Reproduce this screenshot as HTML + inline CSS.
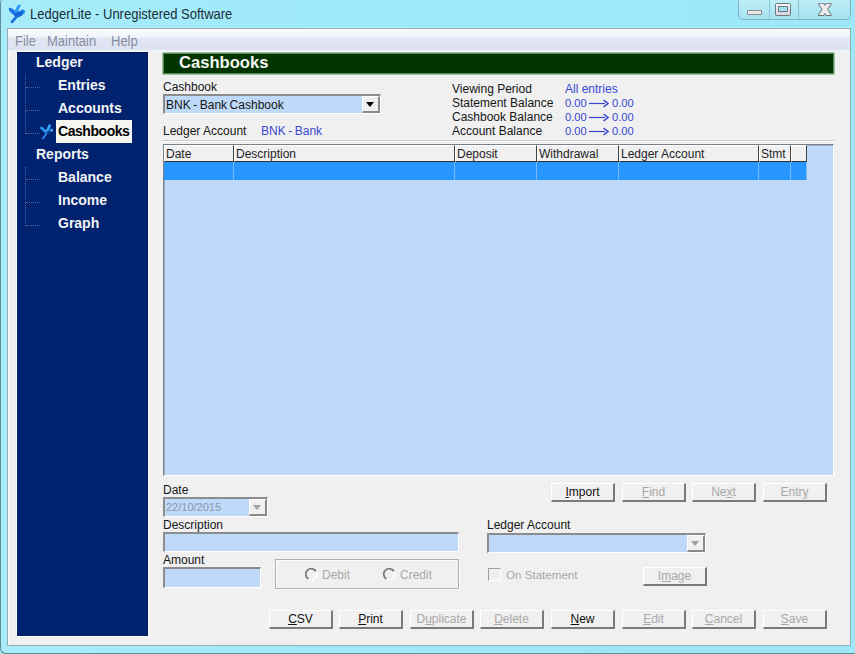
<!DOCTYPE html>
<html><head><meta charset="utf-8">
<style>
*{margin:0;padding:0;box-sizing:border-box}
html,body{width:855px;height:654px;overflow:hidden;background:#a6e4f4}
body{position:relative;font-family:"Liberation Sans",sans-serif;font-size:12px;color:#111}
.a{position:absolute}
#frame{left:0;top:0;width:855px;height:654px;border-left:1px solid #5f8e98;border-bottom:1px solid #5f8e98;border-radius:3px 0 0 6px;
 background:linear-gradient(90deg,#a8ecfa 0%,#9ee9fa 40%,#9ce8f9 100%)}
#title{left:30px;top:6px;font-size:13px;color:#1a2e38;white-space:nowrap;transform-origin:0 3.25px;transform:scaleY(1.13)}
#ctl{left:738px;top:0;width:113px;height:20px;border:1px solid #7fb4c2;border-top:none;border-radius:0 0 5px 5px;background:linear-gradient(#bdeef8,#a7e3f1)}
#client{left:7px;top:28px;width:844px;height:618px;background:#f0f0f0;border:1px solid #96aab0;box-shadow:inset 1px 0 0 #fcfcfc}
#menu{left:8px;top:29px;width:842px;height:23px;background:linear-gradient(#fafbfd 0%,#f3f5fb 32%,#e2e6f4 42%,#dde2f3 90%,#eef0f8 91%,#f4f6fb 100%)}
.mi{top:33px;font-size:13px;color:#868e9c;transform-origin:0 3px;transform:scaleY(1.1)}
#nav{left:17px;top:52px;width:132px;height:585px;background:#00226f;border-right:1px solid #fafcff;border-bottom:1px solid #fafcff;box-shadow:-1px 0 0 #fafcff, inset -1px 0 0 #001a55, inset 0 1px 0 #001456}
.nv{font-size:14px;font-weight:bold;color:#f4f4f4;white-space:nowrap}
#hdr{left:162px;top:52px;width:673px;height:23px;background:#003500;border:1px solid #9cc49c;box-shadow:inset 0 0 0 1px #5a8c5a;border-radius:2px}
#hdrt{left:179px;top:53.3px;font-size:16.6px;font-weight:bold;color:#f4f4f4}
.lb{font-size:12px;color:#161616;white-space:nowrap}
.bl{font-size:12px;color:#3848d0;white-space:nowrap}
.vl{font-size:11.2px;top:0}
.tb{background:#bfd9f9;border-top:2px solid #8c8c8c;border-left:2px solid #8c8c8c;border-bottom:1px solid #fff;border-right:1px solid #fff}
.dd{background:#f0f0f0;border-top:1px solid #fff;border-left:1px solid #fff;border-right:2px solid #8a8a8a;border-bottom:2px solid #8a8a8a}
.btn{height:19px;width:64px;background:#f0f0f0;border-top:1px solid #fff;border-left:1px solid #fff;border-right:2px solid #7a7a7a;border-bottom:2px solid #7a7a7a;text-align:center;font-size:12px;line-height:16px;color:#111}
.dis{color:#a8a8a8}
u{text-decoration:underline}
#grid{left:163px;top:144px;width:671px;height:332px;background:#bfdaf8;border-top:1px solid #7a8086;border-left:1px solid #7a8086;border-bottom:1px solid #fff;border-right:1px solid #fff;box-shadow:inset 1px 1px 0 #9aacc0}
.hc{top:145px;height:17px;background:#f0f0f0;border-top:1px solid #fff;border-left:1px solid #fff;border-right:1px solid #404040;border-bottom:1px solid #303030;font-size:12px;line-height:15px;padding-left:1px;padding-top:1.3px;color:#1e1e1e;white-space:nowrap}
.sc{top:162px;height:18px;background:#2896ff;border-right:1px solid #7ab8f8}
</style></head><body>
<div id="frame" class="a"></div>
<svg class="a" style="left:4px;top:2px" width="24" height="24" viewBox="0 0 24 24">
 <path d="M4.8 5.6 Q8.5 6.2 12 9.4 L11 14 Q7 11.5 5 8.6 Z" fill="#1a74e6"/>
 <path d="M17 2.6 L13.6 11 L10.2 10.4 L13.4 3.4 Q15 2.4 17 2.6 Z" fill="#2c9af4"/>
 <circle cx="18.7" cy="9.8" r="2.3" fill="#2080ea"/>
 <ellipse cx="14.8" cy="12.2" rx="4.6" ry="2.7" fill="#1562d6" transform="rotate(-22 14.8 12.2)"/>
 <path d="M13 14.2 L8 19.8" stroke="#1a6ee0" stroke-width="2.7" stroke-linecap="round"/>
</svg>
<div id="title" class="a">LedgerLite - Unregistered Software</div>
<div id="ctl" class="a"></div>
<div class="a" style="left:769px;top:0;width:1px;height:19px;background:#8cc2cf"></div>
<div class="a" style="left:798px;top:0;width:1px;height:19px;background:#8cc2cf"></div>
<div class="a" style="left:747px;top:10px;width:15px;height:5px;background:#e8e8ea;border:1px solid #8a8a8a;border-radius:1px"></div>
<div class="a" style="left:775px;top:3px;width:16px;height:13px;background:linear-gradient(#f4f4f6,#d8d4dc);border:1px solid #6d787e;border-radius:1.5px"></div>
<div class="a" style="left:778px;top:6px;width:10px;height:6px;background:#a4e2f0;border:1px solid #6d787e"></div>
<svg class="a" style="left:815px;top:0px" width="20" height="20" viewBox="0 0 20 20">
 <path d="M3.8 3.8H8.4L15.9 15.1H11.3Z M11.3 3.8H15.9L8.4 15.1H3.8Z" fill="#6a757a" stroke="#6a757a" stroke-width="1.8" stroke-linejoin="round"/>
 <path d="M3.8 3.8H8.4L15.9 15.1H11.3Z M11.3 3.8H15.9L8.4 15.1H3.8Z" fill="#ecebef"/>
</svg>
<div class="a" style="left:8px;top:27px;width:843px;height:1px;background:#b2eef9"></div>
<div id="client" class="a"></div>
<div id="menu" class="a"></div>
<div class="a mi" style="left:15px">File</div>
<div class="a mi" style="left:47px">Maintain</div>
<div class="a mi" style="left:111px">Help</div>

<div id="nav" class="a"></div>
<div class="a nv" style="left:36px;top:54px">Ledger</div>
<div class="a nv" style="left:58px;top:77px">Entries</div>
<div class="a nv" style="left:58px;top:100px">Accounts</div>
<div class="a" style="left:56px;top:120px;width:76px;height:23px;background:#f6f6f0"></div>
<div class="a nv" style="left:58px;top:123px;color:#000;letter-spacing:-0.45px">Cashbooks</div>
<div class="a nv" style="left:36px;top:146px">Reports</div>
<div class="a nv" style="left:58px;top:169px">Balance</div>
<div class="a nv" style="left:58px;top:192px">Income</div>
<div class="a nv" style="left:58px;top:215px">Graph</div>
<div class="a" style="left:25px;top:75px;width:1px;height:59px;border-left:1px dotted #5060a0"></div>
<div class="a" style="left:26px;top:87px;width:14px;height:1px;border-top:1px dotted #5060a0"></div>
<div class="a" style="left:26px;top:110px;width:14px;height:1px;border-top:1px dotted #5060a0"></div>
<div class="a" style="left:26px;top:133px;width:14px;height:1px;border-top:1px dotted #5060a0"></div>
<div class="a" style="left:25px;top:167px;width:1px;height:59px;border-left:1px dotted #5060a0"></div>
<div class="a" style="left:26px;top:179px;width:14px;height:1px;border-top:1px dotted #5060a0"></div>
<div class="a" style="left:26px;top:202px;width:14px;height:1px;border-top:1px dotted #5060a0"></div>
<div class="a" style="left:26px;top:225px;width:14px;height:1px;border-top:1px dotted #5060a0"></div>
<svg class="a" style="left:36.5px;top:123px" width="19" height="19" viewBox="0 0 24 24">
 <path d="M5.5 6 L12 12" stroke="#2a96f8" stroke-width="3.2" stroke-linecap="round"/>
 <path d="M15.8 3.5 L12.8 10.5" stroke="#34a8ff" stroke-width="3.4" stroke-linecap="round"/>
 <circle cx="18.4" cy="9" r="2" fill="#3a9ef0"/>
 <ellipse cx="13.8" cy="12.5" rx="2.6" ry="2" fill="#0e3a80" transform="rotate(-30 13.5 11.8)"/>
 <path d="M11.8 13.5 L7.5 19.5" stroke="#2a8ae8" stroke-width="2.4" stroke-linecap="round"/>
</svg>

<div id="hdr" class="a"></div>
<div id="hdrt" class="a">Cashbooks</div>

<div class="a lb" style="left:163px;top:80px">Cashbook</div>
<div class="a tb" style="left:163px;top:94px;width:218px;height:20px"></div>
<div class="a lb" style="left:166px;top:98px;word-spacing:-0.8px">BNK - Bank Cashbook</div>
<div class="a dd" style="left:362px;top:96px;width:18px;height:17px"></div>
<svg class="a" style="left:366px;top:102px" width="9" height="5"><path d="M0 0H8L4 5Z" fill="#000"/></svg>
<div class="a lb" style="left:163px;top:124px">Ledger Account</div>
<div class="a bl" style="left:261px;top:124px;word-spacing:-0.8px">BNK - Bank</div>

<div class="a lb" style="left:452px;top:82px">Viewing Period</div>
<div class="a lb" style="left:452px;top:96px">Statement Balance</div>
<div class="a lb" style="left:452px;top:110px">Cashbook Balance</div>
<div class="a lb" style="left:452px;top:124px">Account Balance</div>
<div class="a bl" style="left:565px;top:82px">All entries</div>
<div class="a bl" style="left:565px;top:96px;font-size:11.2px;line-height:14px">0.00</div>
<svg class="a" style="left:589px;top:98px" width="20" height="11" viewBox="0 0 20 11"><path d="M0 5.5H16" stroke="#3646cc" stroke-width="1.2"/><path d="M14.5 2L19 5.5L14.5 9" stroke="#3646cc" stroke-width="1.5" fill="none"/></svg>
<div class="a bl" style="left:612px;top:96px;font-size:11.2px;line-height:14px">0.00</div>
<div class="a bl" style="left:565px;top:110px;font-size:11.2px;line-height:14px">0.00</div>
<svg class="a" style="left:589px;top:112px" width="20" height="11" viewBox="0 0 20 11"><path d="M0 5.5H16" stroke="#3646cc" stroke-width="1.2"/><path d="M14.5 2L19 5.5L14.5 9" stroke="#3646cc" stroke-width="1.5" fill="none"/></svg>
<div class="a bl" style="left:612px;top:110px;font-size:11.2px;line-height:14px">0.00</div>
<div class="a bl" style="left:565px;top:124px;font-size:11.2px;line-height:14px">0.00</div>
<svg class="a" style="left:589px;top:126px" width="20" height="11" viewBox="0 0 20 11"><path d="M0 5.5H16" stroke="#3646cc" stroke-width="1.2"/><path d="M14.5 2L19 5.5L14.5 9" stroke="#3646cc" stroke-width="1.5" fill="none"/></svg>
<div class="a bl" style="left:612px;top:124px;font-size:11.2px;line-height:14px">0.00</div>

<div class="a" style="left:162px;top:140px;width:672px;height:1px;background:#cbcbcb"></div>
<div class="a" style="left:162px;top:141px;width:672px;height:1px;background:#fbfbfb"></div>
<div id="grid" class="a"></div>
<div class="a hc" style="left:164px;width:70px">Date</div>
<div class="a hc" style="left:234px;width:221px">Description</div>
<div class="a hc" style="left:455px;width:82px">Deposit</div>
<div class="a hc" style="left:537px;width:82px">Withdrawal</div>
<div class="a hc" style="left:619px;width:140px">Ledger Account</div>
<div class="a hc" style="left:759px;width:32px">Stmt</div>
<div class="a hc" style="left:791px;width:16px"></div>
<div class="a sc" style="left:164px;width:70px"></div>
<div class="a sc" style="left:234px;width:221px"></div>
<div class="a sc" style="left:455px;width:82px"></div>
<div class="a sc" style="left:537px;width:82px"></div>
<div class="a sc" style="left:619px;width:140px"></div>
<div class="a sc" style="left:759px;width:32px"></div>
<div class="a sc" style="left:791px;width:16px"></div>

<div class="a lb" style="left:163px;top:483px">Date</div>
<div class="a tb" style="left:163px;top:497px;width:105px;height:20px"></div>
<div class="a lb" style="left:166px;top:501px;font-size:11px;color:#8a96aa">22/10/2015</div>
<div class="a dd" style="left:249px;top:499px;width:18px;height:17px"></div>
<svg class="a" style="left:253px;top:505px" width="9" height="5"><path d="M0 0H8L4 5Z" fill="#a0a0a0"/></svg>

<div class="a lb" style="left:163px;top:518px">Description</div>
<div class="a tb" style="left:163px;top:532px;width:296px;height:20px"></div>
<div class="a lb" style="left:163px;top:553px">Amount</div>
<div class="a tb" style="left:163px;top:567px;width:98px;height:21px"></div>

<div class="a" style="left:275px;top:559px;width:184px;height:30px;border:1px solid #b0b0b0;box-shadow:inset 1px 1px 0 #fdfdfd,1px 1px 0 #fdfdfd"></div>
<svg class="a" style="left:304.5px;top:568px" width="13" height="13" viewBox="0 0 13 13">
 <path d="M11 3.5 A5.5 5.5 0 1 0 3.5 11" stroke="#7c7c7c" stroke-width="1.8" fill="none"/>
 <path d="M11 3.5 A5.5 5.5 0 0 1 3.5 11" stroke="#fff" stroke-width="1.3" fill="none"/>
</svg>
<div class="a lb dis" style="left:322px;top:568px">Debit</div>
<svg class="a" style="left:382.5px;top:568px" width="13" height="13" viewBox="0 0 13 13">
 <path d="M11 3.5 A5.5 5.5 0 1 0 3.5 11" stroke="#7c7c7c" stroke-width="1.8" fill="none"/>
 <path d="M11 3.5 A5.5 5.5 0 0 1 3.5 11" stroke="#fff" stroke-width="1.3" fill="none"/>
</svg>
<div class="a lb dis" style="left:400px;top:568px">Credit</div>

<div class="a lb" style="left:487px;top:518px">Ledger Account</div>
<div class="a tb" style="left:487px;top:533px;width:219px;height:20px"></div>
<div class="a dd" style="left:687px;top:535px;width:18px;height:17px"></div>
<svg class="a" style="left:691px;top:541px" width="9" height="5"><path d="M0 0H8L4 5Z" fill="#a0a0a0"/></svg>

<div class="a" style="left:488px;top:568px;width:13px;height:13px;border-top:1px solid #a0a0a0;border-left:1px solid #a0a0a0;border-right:1px solid #fff;border-bottom:1px solid #fff;background:#f0f0f0"></div>
<div class="a lb dis" style="left:506px;top:568px;font-size:11.6px">On Statement</div>

<div class="a btn" style="left:551px;top:483px"><u>I</u>mport</div>
<div class="a btn dis" style="left:622px;top:483px"><u>F</u>ind</div>
<div class="a btn dis" style="left:692px;top:483px">Ne<u>x</u>t</div>
<div class="a btn dis" style="left:763px;top:483px">Entr<u>y</u></div>
<div class="a btn dis" style="left:643px;top:567px;height:19px">I<u>m</u>age</div>

<div class="a btn" style="left:269px;top:610px"><u>C</u>SV</div>
<div class="a btn" style="left:339px;top:610px"><u>P</u>rint</div>
<div class="a btn dis" style="left:410px;top:610px">D<u>u</u>plicate</div>
<div class="a btn dis" style="left:480px;top:610px"><u>D</u>elete</div>
<div class="a btn" style="left:551px;top:610px"><u>N</u>ew</div>
<div class="a btn dis" style="left:622px;top:610px"><u>E</u>dit</div>
<div class="a btn dis" style="left:692px;top:610px"><u>C</u>ancel</div>
<div class="a btn dis" style="left:763px;top:610px"><u>S</u>ave</div>
</body></html>
